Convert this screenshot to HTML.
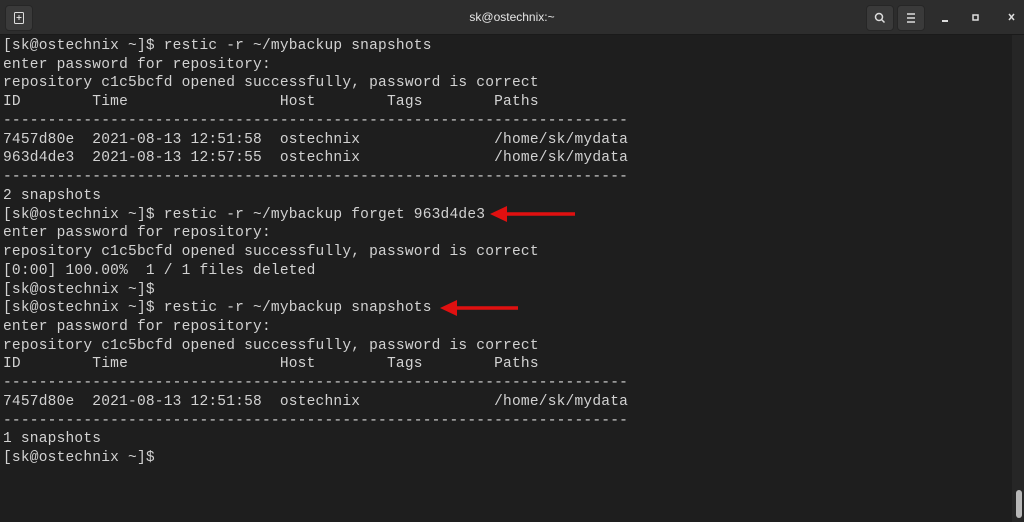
<!DOCTYPE html>
<html><head><meta charset="utf-8"><style>
html,body{margin:0;padding:0;width:1024px;height:522px;overflow:hidden;background:#1e1e1e}
.tb{position:absolute;left:0;top:0;width:1024px;height:34px;background:#2d2d2d;border-bottom:1px solid #1a1a1a}
.title{position:absolute;top:10px;left:0;width:1024px;text-align:center;color:#e6e6e6;font:12px "Liberation Sans",sans-serif}
.btn{position:absolute;top:5px;width:26px;height:24px;background:#3a3a3a;border-radius:4px;border:1px solid #262626}
pre{position:absolute;left:3px;top:37px;margin:0;font:14.55px/18.73px "Liberation Mono",monospace;letter-spacing:0.2px;color:#d2d2d2}
.sb{position:absolute;left:1012px;top:35px;width:12px;height:487px;background:#262626}
.th{position:absolute;left:1016px;top:490px;width:6px;height:28px;background:#b8b8b8;border-radius:3px}
</style></head><body>
<div class="tb">
<div class="btn" style="left:5px"><svg width="26" height="24"><rect x="8.5" y="6.5" width="9" height="11" rx="1" fill="none" stroke="#ddd"/><path d="M13 9v5M10.5 11.5h5" stroke="#ddd"/></svg></div>
<div class="title">sk@ostechnix:~</div>
<div class="btn" style="left:866px"><svg width="26" height="24"><circle cx="12" cy="11" r="3.5" fill="none" stroke="#ddd" stroke-width="1.5"/><path d="M14.5 13.5l3 3" stroke="#ddd" stroke-width="1.5"/></svg></div>
<div class="btn" style="left:897px"><svg width="26" height="24"><path d="M9 8h8M9 12h8M9 16h8" stroke="#ddd" stroke-width="1.5"/></svg></div>
<svg style="position:absolute;left:935px;top:8px" width="89" height="20"><path d="M7 13h6" stroke="#ddd" stroke-width="2"/><rect x="38" y="7" width="5" height="5" fill="none" stroke="#ddd" stroke-width="1.5"/><path d="M74 6l5 6M79 6l-5 6" stroke="#ddd" stroke-width="1.5"/></svg>
</div>
<pre>[sk@ostechnix ~]$ restic -r ~/mybackup snapshots
enter password for repository:
repository c1c5bcfd opened successfully, password is correct
ID        Time                 Host        Tags        Paths
----------------------------------------------------------------------
7457d80e  2021-08-13 12:51:58  ostechnix               /home/sk/mydata
963d4de3  2021-08-13 12:57:55  ostechnix               /home/sk/mydata
----------------------------------------------------------------------
2 snapshots
[sk@ostechnix ~]$ restic -r ~/mybackup forget 963d4de3
enter password for repository:
repository c1c5bcfd opened successfully, password is correct
[0:00] 100.00%  1 / 1 files deleted
[sk@ostechnix ~]$
[sk@ostechnix ~]$ restic -r ~/mybackup snapshots
enter password for repository:
repository c1c5bcfd opened successfully, password is correct
ID        Time                 Host        Tags        Paths
----------------------------------------------------------------------
7457d80e  2021-08-13 12:51:58  ostechnix               /home/sk/mydata
----------------------------------------------------------------------
1 snapshots
[sk@ostechnix ~]$</pre>
<svg style="position:absolute;left:0;top:0" width="1024" height="522">
<path d="M505 214H575" stroke="#e01010" stroke-width="3.5"/><path d="M490 214l17-8v16z" fill="#e01010"/>
<path d="M455 308H518" stroke="#e01010" stroke-width="3.5"/><path d="M440 308l17-8v16z" fill="#e01010"/>
</svg>
<div class="sb"></div><div class="th"></div>
</body></html>
